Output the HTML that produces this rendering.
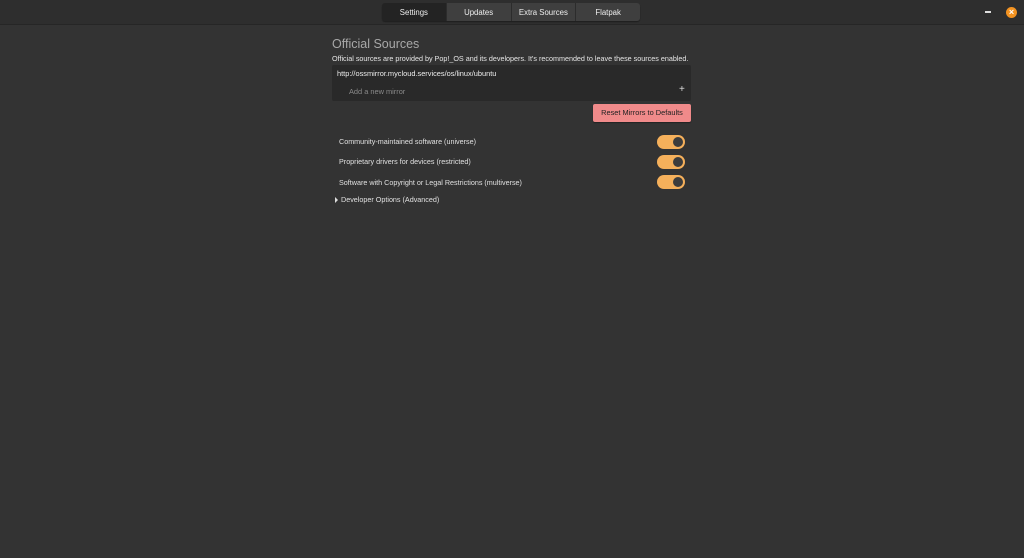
<!DOCTYPE html>
<html><head><meta charset="utf-8"><style>
body{margin:0;width:1024px;height:558px;background:#333333;font-family:"Liberation Sans",sans-serif;color:#e6e6e6;position:relative;overflow:hidden}
.hdr{position:absolute;left:0;top:0;width:1024px;height:24px;background:#2e2e2e;border-bottom:1px solid #262626}
.tabs{position:absolute;left:382px;top:3px;width:258px;height:18px;display:flex;border-radius:3px;overflow:hidden;box-shadow:0 1px 1px #1e1e1e}
.tabs div{flex:1;background:#3f3f3f;font-size:7.8px;line-height:19px;text-align:center;color:#eee;border-left:1px solid #2c2c2c}
.tabs div.a{background:#232323;border-left:none}
.abs{position:absolute;white-space:nowrap}
.sw{position:absolute;left:657px;width:28px;height:14px;border-radius:7px;background:#f5b05b}
.sw:after{content:"";position:absolute;right:2px;top:2px;width:10px;height:10px;border-radius:50%;background:#3c3c3c}
.lbl{position:absolute;left:339px;font-size:7.2px;color:#e0e0e0;white-space:nowrap}
</style></head><body>
<div class="hdr"></div>
<div class="tabs"><div class="a">Settings</div><div>Updates</div><div>Extra Sources</div><div>Flatpak</div></div>
<div class="abs" style="left:985px;top:11px;width:6px;height:1.5px;background:#ddd"></div>
<div class="abs" style="left:1006px;top:7px;width:11px;height:11px;border-radius:50%;background:#f39321;color:#fff;font-size:9px;line-height:11px;text-align:center;font-weight:bold">×</div>
<div class="abs" style="left:332px;top:37px;font-size:12.5px;color:#a8a8a8">Official Sources</div>
<div class="abs" style="left:332px;top:54px;font-size:7.2px;color:#e6e6e6">Official sources are provided by Pop!_OS and its developers. It's recommended to leave these sources enabled.</div>
<div class="abs" style="left:332px;top:65px;width:359px;height:36px;background:#292929;border-radius:2px"></div>
<div class="abs" style="left:337px;top:69px;font-size:7.4px;color:#eee">http://ossmirror.mycloud.services/os/linux/ubuntu</div>
<div class="abs" style="left:349px;top:87px;font-size:7.4px;color:#8a8a8a">Add a new mirror</div>
<div class="abs" style="left:679px;top:84px;font-size:10px;color:#ddd">+</div>
<div class="abs" style="left:593px;top:104px;width:98px;height:18px;background:#f08a8a;border-radius:2px;font-size:7.4px;line-height:18px;text-align:center;color:#222;box-shadow:0 1px 1px #222">Reset Mirrors to Defaults</div>
<div class="lbl" style="top:137px">Community-maintained software (universe)</div>
<div class="sw" style="top:135px"></div>
<div class="lbl" style="top:157px">Proprietary drivers for devices (restricted)</div>
<div class="sw" style="top:155px"></div>
<div class="lbl" style="top:178px">Software with Copyright or Legal Restrictions (multiverse)</div>
<div class="sw" style="top:175px"></div>
<div class="abs" style="left:335px;top:197px;width:0;height:0;border-left:3px solid #ddd;border-top:3px solid transparent;border-bottom:3px solid transparent"></div>
<div class="lbl" style="left:341px;top:195px">Developer Options (Advanced)</div>
</body></html>
